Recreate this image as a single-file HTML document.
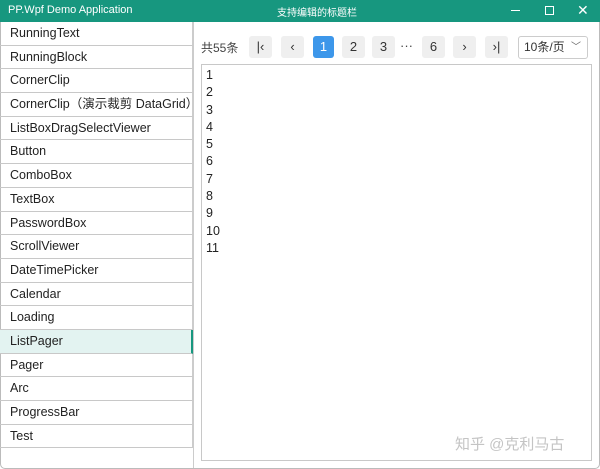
<!DOCTYPE html>
<html><head><meta charset="utf-8"><style>
*{margin:0;padding:0;box-sizing:border-box}
body{width:600px;height:469px;background:#fff;font-family:"Liberation Sans","Noto Sans CJK SC",sans-serif;position:relative;overflow:hidden;color:#222}
.tb{position:absolute;left:0;top:0;width:600px;height:22px;background:#17977f;color:#fff;font-size:11px}
.win{position:absolute;left:0;top:22px;width:600px;height:447px;border:1px solid #bbb;border-top:none;border-radius:0 0 5px 5px}
.list{position:absolute;left:0;top:22px;width:194px;height:446px;border-right:1px solid #ccc}
.it{height:23.7px;border-bottom:1px solid #c8c8c8;font-size:12.5px;line-height:22px;padding-left:10px;border-right:1px solid #ccc;white-space:nowrap;overflow:hidden}
.sel{background:#e3f3f1;border-right:2px solid #17977f}
.b{position:absolute;top:36px;width:23px;height:22px;background:#efefef;border-radius:3px;font-size:13px;text-align:center;line-height:22px;color:#333}
.panel{position:absolute;left:201px;top:64px;width:391px;height:397px;border:1px solid #c8c8c8;padding-top:2px}
.n{font-size:12.5px;line-height:17.3px;padding-left:4px}
</style></head><body>
<div class="tb"><span style="position:absolute;left:8px;top:4px">PP.Wpf Demo Application</span>
<span style="position:absolute;left:277px;top:4px;font-size:10px">支持编辑的标题栏</span>
<span style="position:absolute;left:511px;top:10px;width:9px;height:1px;background:#fff"></span>
<span style="position:absolute;left:545px;top:6px;width:9px;height:9px;border:1px solid #fff"></span>
<span style="position:absolute;left:577px;top:2px;font-size:14px">✕</span></div>
<div class="win"></div>
<div class="list">
<div class="it">RunningText</div><div class="it">RunningBlock</div><div class="it">CornerClip</div><div class="it">CornerClip（演示裁剪 DataGrid）</div><div class="it">ListBoxDragSelectViewer</div><div class="it">Button</div><div class="it">ComboBox</div><div class="it">TextBox</div><div class="it">PasswordBox</div><div class="it">ScrollViewer</div><div class="it">DateTimePicker</div><div class="it">Calendar</div><div class="it">Loading</div><div class="it sel">ListPager</div><div class="it">Pager</div><div class="it">Arc</div><div class="it">ProgressBar</div><div class="it">Test</div>
</div>
<span style="position:absolute;left:201px;top:39px;font-size:12px;color:#444">共55条</span>
<div class="b" style="left:249px">|&lsaquo;</div>
<div class="b" style="left:281px">&lsaquo;</div>
<div class="b" style="left:313px;width:21px;background:#3d97ea;color:#fff">1</div>
<div class="b" style="left:342px">2</div>
<div class="b" style="left:372px">3</div>
<span style="position:absolute;left:400px;top:38px;font-size:13px;color:#444">···</span>
<div class="b" style="left:422px">6</div>
<div class="b" style="left:453px">&rsaquo;</div>
<div class="b" style="left:485px">&rsaquo;|</div>
<div style="position:absolute;left:518px;top:36px;width:70px;height:23px;border:1px solid #ccc;border-radius:3px;font-size:12px;line-height:21px;padding-left:5px;color:#333">10条/页 <span style="position:absolute;right:6px;top:0;font-size:10px;color:#666">﹀</span></div>
<div class="panel">
<div class="n">1</div><div class="n">2</div><div class="n">3</div><div class="n">4</div><div class="n">5</div><div class="n">6</div><div class="n">7</div><div class="n">8</div><div class="n">9</div><div class="n">10</div><div class="n">11</div>
</div>
<span style="position:absolute;left:455px;top:433px;font-size:15px;color:#c4c4c4">知乎 @克利马古</span>
</body></html>
